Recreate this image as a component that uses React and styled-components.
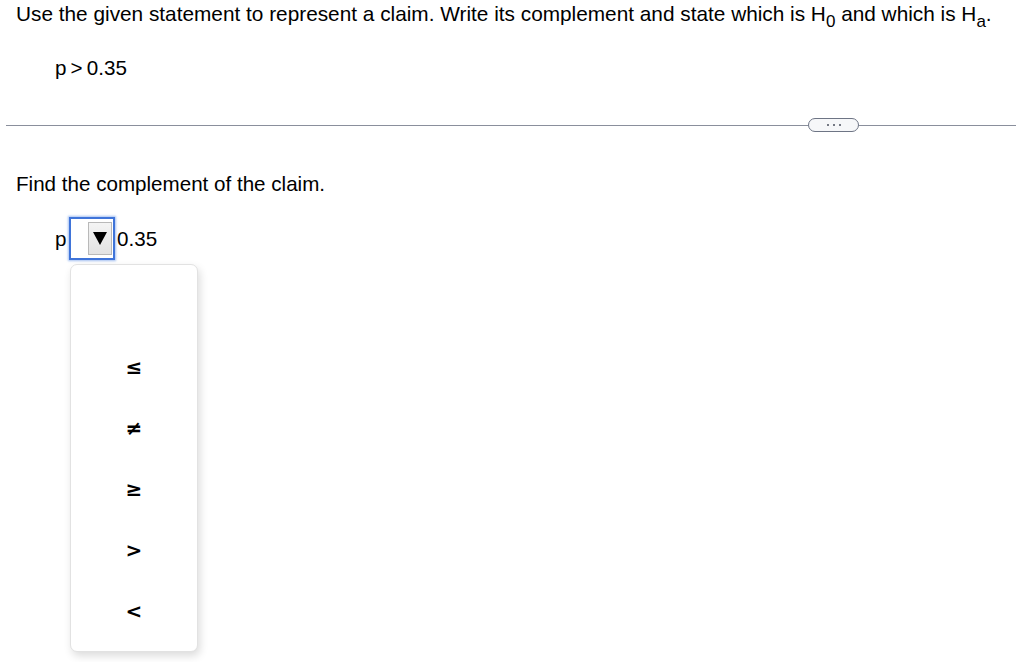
import React from "react";
import styled, { createGlobalStyle } from "styled-components";

const GlobalStyle = createGlobalStyle`
  body {
    margin: 0;
    background: #fff;
    font-family: "Liberation Sans", Arial, sans-serif;
    color: #000;
  }
`;

const Page = styled.div`
  position: relative;
  width: 1016px;
  height: 662px;
  overflow: hidden;
`;

const Prompt = styled.div`
  padding: 2px 0 0 16px;
  font-size: 20.8px;
  line-height: 24px;
  white-space: nowrap;
`;

const Sub = styled.sub`
  font-size: 17px;
  vertical-align: -6px;
  line-height: 0;
`;

const Claim = styled.div`
  margin-top: 30px;
  padding-left: 55px;
  font-size: 20.6px;
  line-height: 24px;
`;

const DividerRow = styled.div`
  display: flex;
  align-items: center;
  margin: 38px 0 0 6px;
  height: 14px;
`;

const Line = styled.div`
  flex: ${(p) => (p.$grow ? 1 : "none")};
  width: ${(p) => p.$width || "auto"};
  height: 1px;
  background: #8a8f9c;
`;

const MorePill = styled.button`
  width: 51px;
  height: 14px;
  padding: 0;
  border: 1px solid #6e7585;
  border-radius: 7px;
  background: #f6f7f9;
  display: flex;
  align-items: center;
  justify-content: center;
  gap: 4px;
`;

const Dot = styled.span`
  width: 2px;
  height: 2px;
  border-radius: 50%;
  background: #4a4f5c;
`;

const Question = styled.div`
  margin-top: 40px;
  padding-left: 16px;
  font-size: 20.6px;
  line-height: 24px;
`;

const AnswerRow = styled.div`
  margin-top: 21px;
  padding-left: 55px;
  display: flex;
  align-items: center;
  font-size: 20.6px;
  line-height: 24px;
  height: 43px;
`;

const Var = styled.span`
  width: 14px;
`;

const SelectBox = styled.div`
  box-sizing: border-box;
  width: 46px;
  height: 43px;
  border: 2px solid #3f74d9;
  box-shadow: 0 0 2px 1px rgba(90, 140, 230, 0.55);
  background: #fff;
  display: flex;
  align-items: center;
  justify-content: flex-end;
  padding-right: 1px;
`;

const ArrowButton = styled.div`
  box-sizing: border-box;
  width: 24px;
  height: 33px;
  border: 1px solid #b9b9b9;
  background: linear-gradient(#f4f4f4, #e3e3e3);
  display: flex;
  align-items: center;
  justify-content: center;
`;

const Value = styled.span`
  margin-left: 2px;
`;

const Menu = styled.ul`
  position: absolute;
  left: 70px;
  top: 264px;
  width: 128px;
  margin: 0;
  padding: 10px 0;
  list-style: none;
  box-sizing: border-box;
  background: #fff;
  border: 1px solid #e2e2e2;
  border-radius: 7px;
  box-shadow: 2px 4px 8px rgba(0, 0, 0, 0.14);
`;

const Option = styled.li`
  height: 61px;
  display: flex;
  align-items: center;
  justify-content: center;
  font-family: "DejaVu Sans", sans-serif;
  font-size: 20px;
  font-weight: bold;
`;

const options = ["", "≤", "≠", "≥", ">", "<"];

function App() {
  return (
    <Page>
      <GlobalStyle />
      <Prompt>
        Use the given statement to represent a claim. Write its complement and state which is H
        <Sub>0</Sub> and which is H<Sub>a</Sub>.
      </Prompt>
      <Claim>p{"\u2009"}&gt;{"\u2009"}0.35</Claim>
      <DividerRow>
        <Line $width="802px" />
        <MorePill>
          <Dot />
          <Dot />
          <Dot />
        </MorePill>
        <Line $grow />
      </DividerRow>
      <Question>Find the complement of the claim.</Question>
      <AnswerRow>
        <Var>p</Var>
        <SelectBox>
          <ArrowButton>
            <svg width="14" height="13" viewBox="0 0 14 13">
              <path d="M0 0 H14 L7 13 Z" fill="#000" />
            </svg>
          </ArrowButton>
        </SelectBox>
        <Value>0.35</Value>
      </AnswerRow>
      <Menu>
        {options.map((o, i) => (
          <Option key={i}>{o}</Option>
        ))}
      </Menu>
    </Page>
  );
}

export default App;
